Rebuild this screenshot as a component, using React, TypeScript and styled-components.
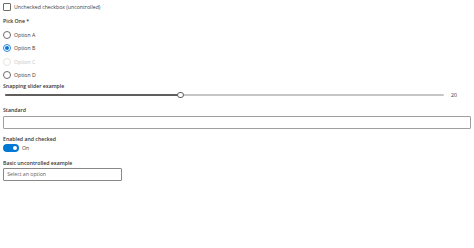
import { createGlobalStyle } from 'styled-components';
import styled from 'styled-components';

const GlobalStyle = createGlobalStyle`
  html, body {
    margin: 0;
    background: #ffffff;
  }
  body {
    padding: 3px 3px;
    font-family: 'Open Sans', 'Noto Sans', sans-serif;
    font-size: 5.2px;
    color: #323130;
  }
`;

const OPTIONS = [
  { key: 'A', label: 'Option A', checked: false, disabled: false },
  { key: 'B', label: 'Option B', checked: true, disabled: false },
  { key: 'C', label: 'Option C', checked: false, disabled: true },
  { key: 'D', label: 'Option D', checked: false, disabled: false },
];

export default function App() {
  const sliderValue = 20;
  const sliderMax = 50;
  return (
    <Page>
      <GlobalStyle />
      <CheckRow>
        <CheckBox />
        <ControlText>Unchecked checkbox (uncontrolled)</ControlText>
      </CheckRow>

      <Group>
        <Label $gap={5}>Pick One *</Label>
        <RadioList>
          {OPTIONS.map((o) => (
            <RadioRow key={o.key}>
              <Radio $checked={o.checked} $disabled={o.disabled} />
              <ControlText $disabled={o.disabled}>{o.label}</ControlText>
            </RadioRow>
          ))}
        </RadioList>
      </Group>

      <Group $top={2}>
        <Label>Snapping slider example</Label>
        <SliderRow>
          <Track>
            <TrackFill style={{ width: `${(sliderValue / sliderMax) * 100}%` }} />
            <Thumb style={{ left: `${(sliderValue / sliderMax) * 100}%` }} />
          </Track>
          <SliderValue>{sliderValue}</SliderValue>
        </SliderRow>
      </Group>

      <Group $top={6}>
        <Label>Standard</Label>
        <TextField />
      </Group>

      <Group $top={5}>
        <Label>Enabled and checked</Label>
        <ToggleRow>
          <Toggle>
            <ToggleKnob />
          </Toggle>
          <ControlText>On</ControlText>
        </ToggleRow>
      </Group>

      <Group $top={6}>
        <Label>Basic uncontrolled example</Label>
        <Dropdown>
          <Placeholder>Select an option</Placeholder>
        </Dropdown>
      </Group>
    </Page>
  );
}

const Page = styled.div`
  display: flex;
  flex-direction: column;
`;

const CheckRow = styled.div`
  display: flex;
  align-items: center;
  gap: 3px;
  height: 8px;
`;

const CheckBox = styled.div`
  width: 8px;
  height: 8px;
  box-sizing: border-box;
  border: 1px solid #6f6d6b;
  border-radius: 1px;
`;

const ControlText = styled.span<{ $disabled?: boolean }>`
  color: ${(p) => (p.$disabled ? '#c8c6c4' : '#3b3a39')};
  line-height: 8px;
  white-space: nowrap;
`;

const Group = styled.div<{ $top?: number }>`
  display: flex;
  flex-direction: column;
  margin-top: ${(p) => p.$top ?? 5}px;
`;

const Label = styled.div<{ $gap?: number }>`
  font-weight: 600;
  line-height: 8px;
  padding: 1px 0;
  margin-bottom: ${(p) => p.$gap ?? 0}px;
`;

const RadioList = styled.div`
  display: flex;
  flex-direction: column;
  gap: 5.4px;
`;

const RadioRow = styled.div`
  display: flex;
  align-items: center;
  gap: 3px;
  height: 8px;
`;

const Radio = styled.div<{ $checked?: boolean; $disabled?: boolean }>`
  position: relative;
  width: 8px;
  height: 8px;
  box-sizing: border-box;
  border-radius: 50%;
  border: 1px solid
    ${(p) => (p.$disabled ? '#e6e4e2' : p.$checked ? '#2b88d8' : '#6f6d6b')};

  &::after {
    content: '';
    display: ${(p) => (p.$checked ? 'block' : 'none')};
    position: absolute;
    left: 50%;
    top: 50%;
    width: 4px;
    height: 4px;
    margin: -2px 0 0 -2px;
    border-radius: 50%;
    background: #0078d4;
  }
`;

const SliderRow = styled.div`
  display: flex;
  align-items: center;
  height: 8px;
  padding-left: 2px;
`;

const Track = styled.div`
  position: relative;
  flex: 1;
  height: 1.6px;
  border-radius: 1px;
  background: #c8c6c4;
`;

const TrackFill = styled.div`
  height: 100%;
  border-radius: 1px;
  background: #605e5c;
`;

const Thumb = styled.div`
  position: absolute;
  top: 50%;
  width: 6.4px;
  height: 6.4px;
  margin: -3.2px 0 0 -3.2px;
  box-sizing: border-box;
  border: 1px solid #605e5c;
  border-radius: 50%;
  background: #ffffff;
`;

const SliderValue = styled.span`
  width: 20px;
  margin-left: 7px;
  line-height: 8px;
`;

const TextField = styled.div`
  margin-top: 1px;
  height: 12.8px;
  box-sizing: border-box;
  border: 1px solid #a19f9d;
  border-radius: 1px;
`;

const ToggleRow = styled.div`
  display: flex;
  align-items: center;
  gap: 3px;
`;

const Toggle = styled.div`
  display: flex;
  align-items: center;
  justify-content: flex-end;
  width: 16px;
  height: 8px;
  padding: 0 1.6px;
  box-sizing: border-box;
  border-radius: 4px;
  background: #0078d4;
`;

const ToggleKnob = styled.div`
  width: 4px;
  height: 4px;
  border-radius: 50%;
  background: #ffffff;
`;

const Dropdown = styled.div`
  display: flex;
  align-items: center;
  width: 119px;
  height: 12.8px;
  padding: 0 3.2px;
  box-sizing: border-box;
  border: 1px solid #8a8886;
  border-radius: 1px;
`;

const Placeholder = styled.span`
  color: #605e5c;
  white-space: nowrap;
`;
